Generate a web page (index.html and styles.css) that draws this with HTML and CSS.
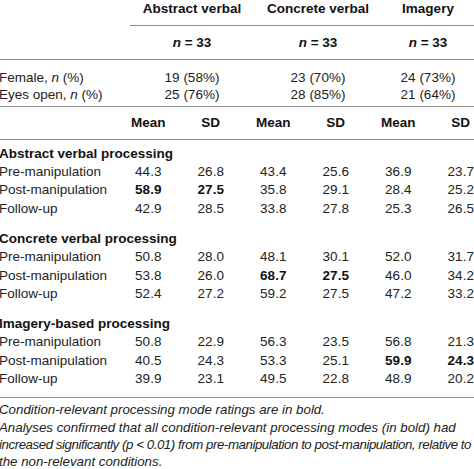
FILE: index.html
```html
<!DOCTYPE html>
<html lang="en">
<head>
  <meta charset="UTF-8">
  <meta name="viewport" content="width=device-width, initial-scale=1.0">
  <title>Processing mode ratings by condition</title>
  <link rel="stylesheet" href="styles.css">
</head>
<body>
  <div class="sheet">
    <div class="tri groups">
      <div class="blank"></div>
      <div class="grp">Abstract verbal</div>
      <div class="grp">Concrete verbal</div>
      <div class="grp">Imagery</div>
    </div>

    <div class="tri sizes">
      <div></div>
      <div><i>n</i> = 33</div>
      <div><i>n</i> = 33</div>
      <div><i>n</i> = 33</div>
    </div>

    <div class="counts">
      <div class="tri">
        <div class="label">Female, <i>n</i> (%)</div>
        <div>19 (58%)</div>
        <div>23 (70%)</div>
        <div>24 (73%)</div>
      </div>
      <div class="tri">
        <div class="label">Eyes open, <i>n</i> (%)</div>
        <div>25 (76%)</div>
        <div>28 (85%)</div>
        <div>21 (64%)</div>
      </div>
    </div>

    <div class="six stats-head">
      <div></div>
      <div>Mean</div><div>SD</div>
      <div>Mean</div><div>SD</div>
      <div>Mean</div><div>SD</div>
    </div>

    <div class="data">
      <div class="section">
        <div class="sec-title">Abstract verbal processing</div>
        <div class="six">
          <div class="label">Pre-manipulation</div>
          <div>44.3</div><div>26.8</div><div>43.4</div><div>25.6</div><div>36.9</div><div>23.7</div>
        </div>
        <div class="six">
          <div class="label">Post-manipulation</div>
          <div class="hi">58.9</div><div class="hi">27.5</div><div>35.8</div><div>29.1</div><div>28.4</div><div>25.2</div>
        </div>
        <div class="six">
          <div class="label">Follow-up</div>
          <div>42.9</div><div>28.5</div><div>33.8</div><div>27.8</div><div>25.3</div><div>26.5</div>
        </div>
      </div>

      <div class="section">
        <div class="sec-title">Concrete verbal processing</div>
        <div class="six">
          <div class="label">Pre-manipulation</div>
          <div>50.8</div><div>28.0</div><div>48.1</div><div>30.1</div><div>52.0</div><div>31.7</div>
        </div>
        <div class="six">
          <div class="label">Post-manipulation</div>
          <div>53.8</div><div>26.0</div><div class="hi">68.7</div><div class="hi">27.5</div><div>46.0</div><div>34.2</div>
        </div>
        <div class="six">
          <div class="label">Follow-up</div>
          <div>52.4</div><div>27.2</div><div>59.2</div><div>27.5</div><div>47.2</div><div>33.2</div>
        </div>
      </div>

      <div class="section">
        <div class="sec-title">Imagery-based processing</div>
        <div class="six">
          <div class="label">Pre-manipulation</div>
          <div>50.8</div><div>22.9</div><div>56.3</div><div>23.5</div><div>56.8</div><div>21.3</div>
        </div>
        <div class="six">
          <div class="label">Post-manipulation</div>
          <div>40.5</div><div>24.3</div><div>53.3</div><div>25.1</div><div class="hi">59.9</div><div class="hi">24.3</div>
        </div>
        <div class="six">
          <div class="label">Follow-up</div>
          <div>39.9</div><div>23.1</div><div>49.5</div><div>22.8</div><div>48.9</div><div>20.2</div>
        </div>
      </div>
    </div>

    <div class="notes">
      <p>Condition-relevant processing mode ratings are in bold.</p>
      <p>Analyses confirmed that all condition-relevant processing modes (in bold) had<br>
        <span class="tight">increased significantly (p &lt; 0.01) from pre-manipulation to post-manipulation, relative to</span><br>
        the non-relevant conditions.</p>
    </div>
  </div>
</body>
</html>
```

FILE: styles.css
```css
html, body {
  margin: 0;
  background-color: #fff;
  overflow: hidden;
}
body {
  font-family: "Liberation Sans", Arial, sans-serif;
  font-size: 13.5px;
  color: #222;
}
.sheet {
  width: 475px;
  margin-left: -1px;
  overflow: hidden;
}

/* three-group rows at the top */
.tri {
  display: grid;
  grid-template-columns: 131px 124px 128px 92px;
  white-space: nowrap;
}
.tri > div {
  text-align: center;
}
.tri > .label {
  text-align: left;
}
.groups .grp {
  font-weight: bold;
  color: #111;
  line-height: 18.6px;
  padding-bottom: 6.4px;
  border-bottom: 1px solid #8f8f8f;
}
.groups .blank {
  border-bottom: 1px solid transparent;
}
.sizes {
  font-weight: bold;
  color: #111;
  line-height: 18.3px;
  padding: 7.9px 0 7.1px;
  border-bottom: 1px solid #8f8f8f;
}
.counts {
  line-height: 17px;
  padding: 8.5px 0 3.2px;
  border-bottom: 1px solid #8f8f8f;
}

/* mean / sd grid */
.six {
  display: grid;
  grid-template-columns: 118px repeat(6, 62.5px);
  white-space: nowrap;
}
.six > div {
  text-align: center;
}
.six > .label {
  text-align: left;
}
.stats-head {
  font-weight: bold;
  color: #111;
  line-height: 18px;
  padding: 7px 0 7.3px;
  border-bottom: 1px solid #8f8f8f;
}
.data {
  line-height: 18.3px;
  padding: 4.5px 0 8.3px;
  border-bottom: 1px solid #8f8f8f;
}
.section + .section {
  margin-top: 12px;
}
.sec-title {
  font-weight: bold;
  color: #111;
}
.hi {
  font-weight: bold;
  color: #111;
}

.notes {
  font-style: italic;
  font-size: 13.3px;
  line-height: 17.4px;
  padding-top: 3.6px;
  white-space: nowrap;
}
.notes p {
  margin: 0;
}
.notes .tight {
  letter-spacing: -0.45px;
}
```
